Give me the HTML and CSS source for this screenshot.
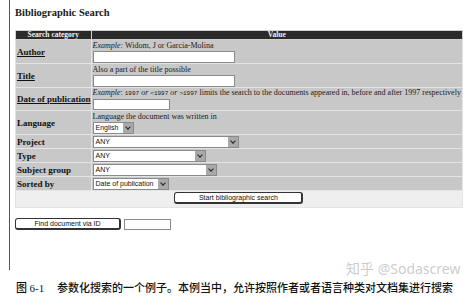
FILE: index.html
```html
<!DOCTYPE html>
<html lang="en">

<head>
    <meta charset="UTF-8" />
    <meta name="viewport" content="width=device-width, initial-scale=1.0" />
    <title>Bibliographic Search</title>
    <link rel="stylesheet" href="styles.css">
</head>

<body>
    <div class="frame">
        <div class="heading">Bibliographic Search</div>
        <table class="search">
            <tr class="head">
                <th class="cat">Search category</th>
                <th>Value</th>
            </tr>
            <tr>
                <td class="label"><a>Author</a></td>
                <td class="value">
                    <div class="hint"><i>Example:</i> Widom, J or Garcia-Molina</div>
                    <input type="text" class="field w-long" />
                </td>
            </tr>
            <tr>
                <td class="label"><a>Title</a></td>
                <td class="value">
                    <div class="hint">Also a part of the title possible</div>
                    <input type="text" class="field w-long" />
                </td>
            </tr>
            <tr>
                <td class="label"><a>Date of publication</a></td>
                <td class="value tight">
                    <div class="hint"><i>Example</i>: <code>1997</code> <i>or</i> <code>&lt;1997</code> <i>or</i> <code>&gt;1997</code> limits the search to the documents appeared in, before and after 1997 respectively</div>
                    <input type="text" class="field w-date" />
                </td>
            </tr>
            <tr>
                <td class="label">Language</td>
                <td class="value">
                    <div class="hint">Language the document was written in</div>
                    <div class="select w-lang"><span class="opt">English</span><span class="arrow"></span></div>
                </td>
            </tr>
            <tr>
                <td class="label">Project</td>
                <td class="value">
                    <div class="select w-project"><span class="opt">ANY</span><span class="arrow"></span></div>
                </td>
            </tr>
            <tr>
                <td class="label">Type</td>
                <td class="value">
                    <div class="select w-type"><span class="opt">ANY</span><span class="arrow"></span></div>
                </td>
            </tr>
            <tr>
                <td class="label">Subject group</td>
                <td class="value">
                    <div class="select w-subject"><span class="opt">ANY</span><span class="arrow"></span></div>
                </td>
            </tr>
            <tr>
                <td class="label">Sorted by</td>
                <td class="value">
                    <div class="select w-sort"><span class="opt">Date of publication</span><span class="arrow"></span></div>
                </td>
            </tr>
            <tr class="actions">
                <td colspan="2"><button class="btn w-start">Start bibliographic search</button></td>
            </tr>
        </table>

        <div class="find">
            <button class="btn w-find">Find document via ID</button>
            <input type="text" class="field w-id" />
        </div>
    </div>

    <div class="caption"><span class="fig">图 <span class="num">6-1</span></span>参数化搜索的一个例子。本例当中，允许按照作者或者语言种类对文档集进行搜索</div>
    <div class="watermark">知乎 @Sodascrew</div>
</body>

</html>
```

FILE: styles.css
```css
html,
body {
    margin: 0;
    padding: 0;
    background-color: #fff;
    color: #111;
    font-family: "Liberation Serif", serif;
    overflow: hidden;
}

body {
    position: relative;
    width: 474px;
    height: 296px;
}

.frame {
    margin-left: 9px;
    border-left: 1px solid #555;
    padding: 6px 0 0 5px;
    height: 264px;
}

.heading {
    font-size: 10.5px;
    font-weight: bold;
    line-height: 14px;
    margin-bottom: 10px;
    color: #1a1a1a;
}

.search {
    width: 444px;
    border-collapse: collapse;
    border-spacing: 0;
    border: 1px solid #999;
}

.search th {
    background-color: #2b2b2b;
    color: #f2f2f2;
    font-size: 7.5px;
    line-height: 8px;
    height: 8px;
    padding: 0;
    text-align: center;
    border: 1px solid #d0d0d0;
}

.search th.cat {
    width: 72px;
}

.search td {
    background-color: #c8c8c8;
    border: 1px solid #e4e4e4;
    padding: 0;
}

.label {
    font-size: 9px;
    font-weight: bold;
    padding-left: 1px !important;
    vertical-align: middle;
    white-space: nowrap;
}

.label a {
    text-decoration: underline;
    color: #111;
}

.value {
    padding: 1px 1px 0 1px !important;
    vertical-align: top;
}

.value.tight {
    padding-top: 0 !important;
}

.hint {
    font-size: 8px;
    line-height: 10px;
    white-space: nowrap;
    color: #1a1a1a;
}

.hint code {
    font-family: "Liberation Mono", monospace;
    font-size: 6px;
}

.field {
    display: block;
    box-sizing: border-box;
    height: 12px;
    margin: 0;
    padding: 0;
    border: 1px solid #8a8a8a;
    background-color: #fff;
}

.w-long { width: 142px; }
.w-date { width: 77px; height: 11px; }
.w-id { width: 47px; height: 11px; }

.select {
    display: flex;
    box-sizing: border-box;
    height: 12px;
    border: 1px solid #8a8a8a;
    background-color: #fff;
    font-family: "Liberation Sans", sans-serif;
    font-size: 7px;
    line-height: 10px;
}

.opt {
    flex: 1;
    padding-left: 2px;
    white-space: nowrap;
    overflow: hidden;
}

.arrow {
    width: 10px;
    background-color: #a9a9a9;
    display: flex;
    justify-content: center;
    align-items: center;
}

.arrow::after {
    content: "";
    width: 3px;
    height: 3px;
    border-right: 1px solid #222;
    border-bottom: 1px solid #222;
    transform: translateY(-1px) rotate(45deg);
}

.w-lang { width: 41px; }
.w-project { width: 146px; }
.w-type { width: 113px; }
.w-subject { width: 124px; }
.w-sort { width: 76px; }

.search tr.actions td {
    background-color: #efefef;
    text-align: center;
    height: 15px;
    padding: 1px 0 0 !important;
    vertical-align: top;
}

.btn {
    display: block;
    box-sizing: border-box;
    height: 12px;
    padding: 0;
    margin: 0;
    background-color: #fff;
    border: 1px solid #333;
    border-right-width: 2px;
    border-bottom-width: 2px;
    border-radius: 3px;
    font-family: "Liberation Sans", sans-serif;
    font-size: 7px;
    line-height: 9px;
    color: #111;
}

.actions .btn {
    margin: 0 auto;
}

.w-start { width: 129px; }
.w-find { width: 106px; }

.find {
    display: flex;
    align-items: flex-start;
    gap: 3px;
    margin-top: 10px;
}

.find .field {
    margin-top: 1px;
}

.caption {
    margin: 11px 0 0 16px;
    font-family: "Noto Sans CJK SC", sans-serif;
    font-size: 11px;
    font-weight: 500;
    line-height: 12px;
    white-space: nowrap;
    color: #111;
}

.fig {
    display: inline-block;
    width: 41px;
}

.num {
    font-family: "Liberation Serif", serif;
    font-size: 11px;
}

.watermark {
    position: absolute;
    left: 346px;
    top: 262px;
    font-family: "Noto Sans", "Noto Sans CJK SC", sans-serif;
    font-size: 14px;
    line-height: 14px;
    color: rgba(160, 160, 160, 0.55);
    white-space: nowrap;
}
```
